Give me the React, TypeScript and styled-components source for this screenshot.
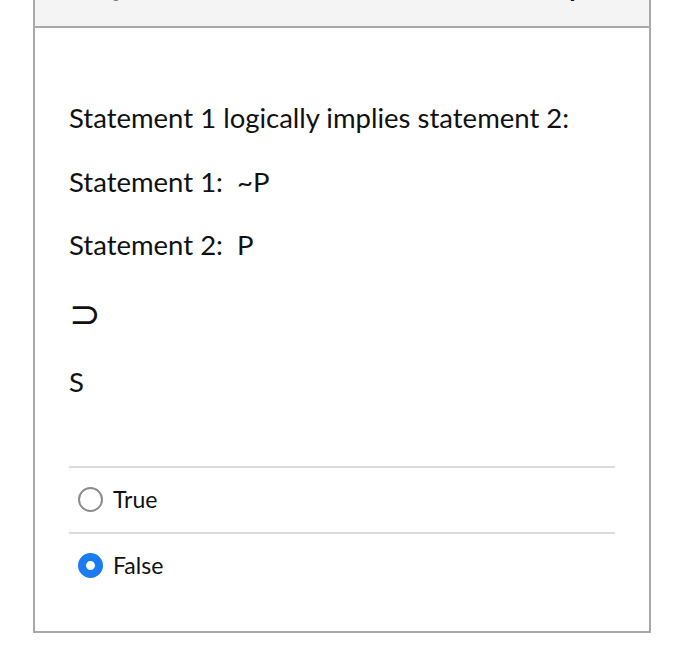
import React, { useState } from 'react';
import styled, { createGlobalStyle } from 'styled-components';

const GlobalStyle = createGlobalStyle`
  html, body {
    margin: 0;
    padding: 0;
    background: #ffffff;
  }
  body {
    font-family: Lato, "Open Sans", Arial, sans-serif;
    color: #111111;
    overflow: hidden;
  }
`;

const answers = ['True', 'False'];

export default function App() {
  const [selected, setSelected] = useState('False');

  return (
    <>
      <GlobalStyle />
      <Page>
        <Card>
          <CardHeader>
            <HeaderTitle>Question 4</HeaderTitle>
            <HeaderPoints>1 pts</HeaderPoints>
          </CardHeader>
          <CardBody>
            <Prompt>Statement 1 logically implies statement 2:</Prompt>
            <Prompt>Statement 1:&nbsp; ~P</Prompt>
            <Prompt>Statement 2:&nbsp; P</Prompt>
            <Prompt symbol>⊃</Prompt>
            <Prompt>S</Prompt>
            <AnswerList>
              {answers.map((a) => (
                <AnswerRow key={a} onClick={() => setSelected(a)}>
                  <Radio checked={selected === a} />
                  <AnswerLabel>{a}</AnswerLabel>
                </AnswerRow>
              ))}
            </AnswerList>
          </CardBody>
        </Card>
      </Page>
    </>
  );
}

const Page = styled.div`
  padding: 0 49px 0 33px;
`;

const Card = styled.div`
  margin-top: -32px;
  border: 2px solid #a9a9a9;
  border-top: none;
  background: #ffffff;
`;

const CardHeader = styled.div`
  display: flex;
  justify-content: space-between;
  align-items: flex-end;
  height: 60px;
  padding: 0 44px 0 62px;
  background: #f4f4f4;
  border-bottom: 2px solid #a9a9a9;
  box-sizing: border-box;
`;

const HeaderTitle = styled.span`
  font-size: 26px;
  font-weight: 700;
  line-height: 1;
  margin-bottom: 26px;
`;

const HeaderPoints = styled.span`
  font-size: 26px;
  font-weight: 700;
  line-height: 1;
  margin-bottom: 26px;
`;

const CardBody = styled.div`
  padding: 70px 34px 33px 34px;
`;

const Prompt = styled.p<{ symbol?: boolean }>`
  margin: 0 0 ${(p) => (p.symbol ? '28px' : '23.5px')};
  padding-top: ${(p) => (p.symbol ? '5px' : '0')};
  font-size: ${(p) => (p.symbol ? '38px' : '27.5px')};
  line-height: 40px;
  font-family: ${(p) => (p.symbol ? '"DejaVu Sans", sans-serif' : 'inherit')};
`;

const AnswerList = styled.div`
  margin-top: 64px;
`;

const AnswerRow = styled.label`
  display: flex;
  align-items: center;
  height: 64px;
  border-top: 2px solid #dcdcdc;
  padding-left: 9px;
  cursor: pointer;
`;

const Radio = styled.span<{ checked: boolean }>`
  width: 25px;
  height: 25px;
  border-radius: 50%;
  box-sizing: border-box;
  border: ${(p) => (p.checked ? '8px solid #1a7cf0' : '2px solid #8c8c8c')};
  background: #ffffff;
  margin-right: 10px;
`;

const AnswerLabel = styled.span`
  font-size: 23px;
  line-height: 1;
`;
